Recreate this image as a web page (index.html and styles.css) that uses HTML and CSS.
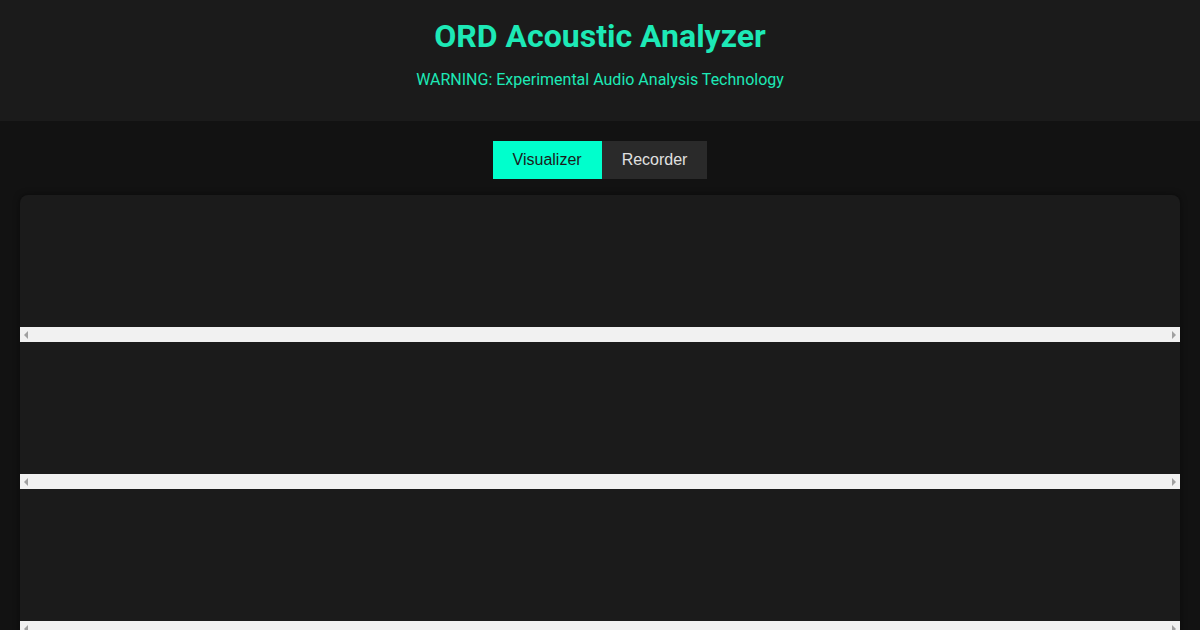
FILE: index.html
```html
<!DOCTYPE html>
<html>
<head>
<meta charset="utf-8">
<link rel="stylesheet" href="styles.css">
</head>
<body>
<header class="header">
  <h1 class="title">ORD Acoustic Analyzer</h1>
  <p class="subtitle">WARNING: Experimental Audio Analysis Technology</p>
</header>
<main class="main">
  <nav class="tabs">
    <button class="tab active">Visualizer</button>
    <button class="tab">Recorder</button>
  </nav>
  <section class="panel">
    <div class="scroller">
      <div class="plot"></div>
      <div class="hbar"><span class="arrow left"></span><span class="arrow right"></span></div>
    </div>
    <div class="scroller">
      <div class="plot"></div>
      <div class="hbar"><span class="arrow left"></span><span class="arrow right"></span></div>
    </div>
    <div class="scroller">
      <div class="plot"></div>
      <div class="hbar"><span class="arrow left"></span><span class="arrow right"></span></div>
    </div>
  </section>
</main>
</body>
</html>
```
FILE: styles.css
```css
html, body {
  margin: 0;
  padding: 0;
  background: #121212;
  font-family: Roboto, "Liberation Sans", sans-serif;
  overflow: hidden;
  height: 630px;
}
.header {
  background: #1b1b1b;
  height: 121px;
  box-sizing: border-box;
  padding-top: 17px;
  text-align: center;
}
.title {
  margin: 0;
  font-size: 32px;
  font-weight: 700;
  line-height: 38px;
  color: #1de9b6;
}
.subtitle {
  margin: 15px 0 0;
  font-size: 16px;
  line-height: 20px;
  color: #1de9b6;
}
.main {
  padding: 20px 20px 0;
}
.tabs {
  display: flex;
  justify-content: center;
  margin-bottom: 16px;
}
.tab {
  font-family: "Liberation Sans", Arial, sans-serif;
  font-size: 16px;
  height: 38px;
  padding: 0 20px;
  border: none;
  background: #2a2a2a;
  color: #e0e0e0;
  cursor: pointer;
}
.tab.active {
  background: #00ffcc;
  color: #1b1b1b;
}
.panel {
  background: #1b1b1b;
  border-radius: 8px;
  box-shadow: 0 0 6px rgba(0, 0, 0, 0.5);
  padding-bottom: 20px;
}
.scroller {
  display: flex;
  flex-direction: column;
}
.plot {
  height: 132px;
}
.hbar {
  height: 15px;
  background: #f1f1f1;
  display: flex;
  justify-content: space-between;
  align-items: center;
  padding: 0 4px;
}
.arrow {
  width: 0;
  height: 0;
  border-top: 4px solid transparent;
  border-bottom: 4px solid transparent;
}
.arrow.left {
  border-right: 4px solid #a0a0a0;
}
.arrow.right {
  border-left: 4px solid #a0a0a0;
}
```
